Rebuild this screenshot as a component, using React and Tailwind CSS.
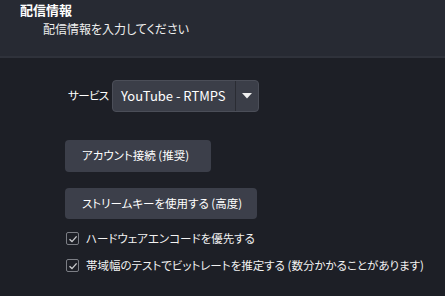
import React from 'react';

const font = { fontFamily: '"Noto Sans CJK JP", "Noto Sans", sans-serif' };

const Check = ({ label }) => (
    <label className="flex items-center gap-[7px] h-[27px] text-[11.5px] text-[#f2f2f2]">
        <span className="w-[13px] h-[13px] border border-[#7c7e85] rounded-[2px] flex items-center justify-center bg-[#1d1f26]">
            <svg width="10" height="10" viewBox="0 0 10 10" fill="none">
                <path d="M1.5 5.2 L4 7.6 L8.6 2.4" stroke="#c9cacd" strokeWidth="1.4" />
            </svg>
        </span>
        <span>{label}</span>
    </label>
);

const App = () => {
    return (
        <div className="w-[445px] h-[296px] overflow-hidden bg-[#1d1f26] flex flex-col whitespace-nowrap [font-feature-settings:'palt']" style={font}>
            {/* ヘッダー */}
            <div className="h-[58px] shrink-0 bg-[#272a33] border-b-2 border-[#2f323b] pl-[20px]">
                <h1 className="text-[13px] font-bold text-white leading-[19px]">配信情報</h1>
                <p className="text-[12px] text-[#eeeeee] pl-[23px] leading-[18px] mt-[1px]">配信情報を入力してください</p>
            </div>

            <div className="pl-[65px] pt-[22px] flex flex-col">
                <div className="flex items-center">
                    <span className="w-[47px] text-[11.5px] text-white pl-[3px] tracking-[-0.6px]">サービス</span>
                    <div className="flex h-[32px] w-[147px] rounded-[4px] border border-[#4b4e58] bg-[#3b3e48] text-[13px] text-white">
                        <span className="flex-1 flex items-center pl-[8px]">YouTube - RTMPS</span>
                        <span className="w-[23px] border-l border-[#2a2c33] flex items-center justify-center">
                            <svg width="10" height="6" viewBox="0 0 10 6"><path d="M0 0 H10 L5 5.5 Z" fill="#f0f0f0" /></svg>
                        </span>
                    </div>
                </div>

                <button className="mt-[28px] w-[146px] h-[32px] rounded-[4px] bg-[#3c3f4a] text-[11.5px] text-white text-left pl-[17px]">
                    アカウント接続 (推奨)
                </button>
                <button className="mt-[16px] w-[192px] h-[31px] rounded-[4px] bg-[#3c3f4a] text-[11.5px] text-white text-left pl-[17px]">
                    ストリームキーを使用する (高度)
                </button>

                <div className="mt-[6px] pl-[1px] flex flex-col">
                    <Check label="ハードウェアエンコードを優先する" />
                    <Check label="帯域幅のテストでビットレートを推定する (数分かかることがあります)" />
                </div>
            </div>
        </div>
    );
};

export default App;
